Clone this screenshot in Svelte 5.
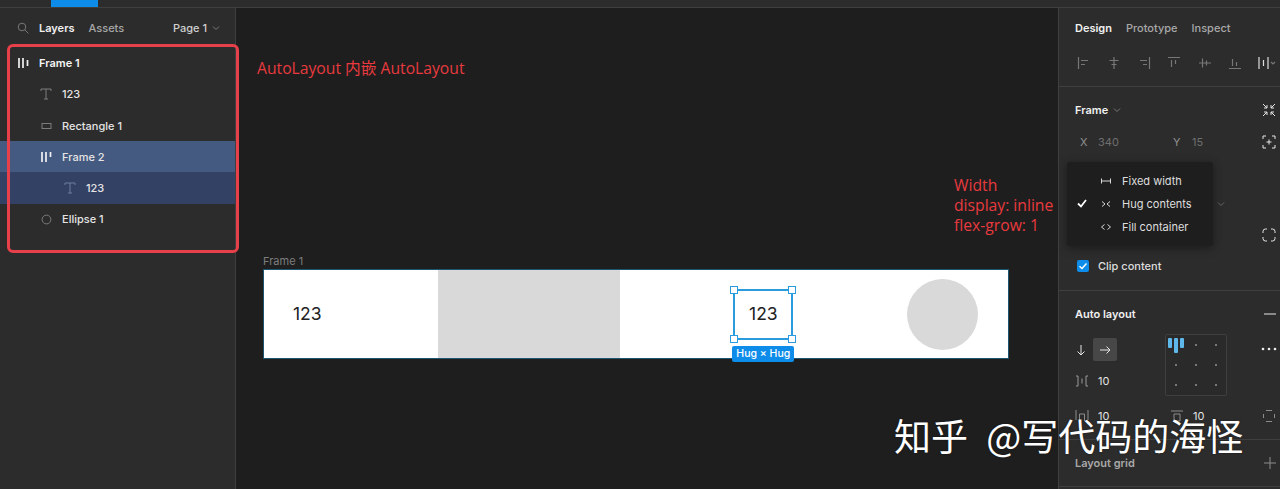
<script lang="ts">
	// Figma editor: layers panel, canvas with auto layout frame, design panel.
	type Layer = { name: string; depth: number; icon: string; tone?: string; strong?: boolean };

	const layers: Layer[] = [
		{ name: 'Frame 1', depth: 1, icon: 'auto', strong: true },
		{ name: '123', depth: 2, icon: 'text' },
		{ name: 'Rectangle 1', depth: 2, icon: 'rect' },
		{ name: 'Frame 2', depth: 2, icon: 'auto2', tone: 'selected' },
		{ name: '123', depth: 3, icon: 'text', tone: 'child' },
		{ name: 'Ellipse 1', depth: 2, icon: 'ellipse' }
	];

	const aligns = [
		'M1.5 1v12M4 4.5h7M4 8.5h4',
		'M7 1v12M2.5 4.5h9M4.5 8.5h5',
		'M12.5 1v12M3 4.5h7M6 8.5h4',
		'M1 1.5h12M4.5 4v7M8.5 4v4',
		'M1 7h12M4.5 2.5v9M8.5 4.5v5',
		'M1 12.5h12M4.5 3v7M8.5 6v4'
	];

	const menu = [
		{ label: 'Fixed width', d: 'M1.5 2.5v5M10.5 2.5v5M1.5 5h9', on: false },
		{ label: 'Hug contents', d: 'M2 2.5 5 5 2 7.5M10 2.5 7 5l3 2.5', on: true },
		{ label: 'Fill container', d: 'M4.5 2.5 1.5 5l3 2.5M7.5 2.5l3 2.5-3 2.5', on: false }
	];

	const dots = [1, 2, 3, 4, 5, 6, 7, 8];
</script>

<div class="app">
	<div class="topbar"><span class="tab-blue"></span></div>

	<div class="main">
		<aside class="left">
			<div class="left-head">
				<svg class="search" width="12" height="12" viewBox="0 0 12 12">
					<circle cx="5" cy="5" r="3.8" />
					<path d="M8 8l3.4 3.4" />
				</svg>
				<span class="tab on">Layers</span>
				<span class="tab">Assets</span>
				<span class="page">Page 1
					<svg width="8" height="6" viewBox="0 0 8 6"><path d="M1 1.5l3 3 3-3" /></svg>
				</span>
			</div>

			<ul class="layers">
				{#each layers as l}
					<li class="layer depth-{l.depth} {l.tone ?? ''}" class:strong={l.strong}>
						<span class="layer-icon">
							{#if l.icon === 'auto'}
								<svg width="11" height="10" viewBox="0 0 11 10"><path class="thick" d="M1 0v10M5 0v10M9.5 2v6" /></svg>
							{:else if l.icon === 'auto2'}
								<svg width="11" height="10" viewBox="0 0 11 10"><path class="thick" d="M1 0v10M5 0v10M9.5 0v5" /></svg>
							{:else if l.icon === 'text'}
								<svg width="12" height="12" viewBox="0 0 12 12"><path class="dim" d="M1 3V1h10v2M6 1v10M4 11h4" /></svg>
							{:else if l.icon === 'rect'}
								<svg width="11" height="8" viewBox="0 0 11 8"><rect class="dim" x="1" y="1.5" width="9" height="5" /></svg>
							{:else}
								<svg width="11" height="11" viewBox="0 0 11 11"><circle class="dim" cx="5.5" cy="5.5" r="4.4" /></svg>
							{/if}
						</span>
						{l.name}
					</li>
				{/each}
			</ul>
			<div class="red-box"></div>
		</aside>

		<main class="canvas">
			<p class="note note-top">AutoLayout 内嵌 AutoLayout</p>
			<p class="note note-side">Width<br />display: inline<br />flex-grow: 1</p>

			<span class="frame-label">Frame 1</span>
			<div class="frame">
				<span class="num">123</span>
				<div class="grey"></div>
				<div class="hug">
					<span class="num">123</span>
					<i class="handle tl"></i><i class="handle tr"></i><i class="handle bl"></i><i class="handle br"></i>
					<span class="hug-tag">Hug × Hug</span>
				</div>
				<div class="ball"></div>
			</div>
		</main>

		<aside class="right">
			<div class="right-tabs">
				<span class="tab on">Design</span>
				<span class="tab">Prototype</span>
				<span class="tab">Inspect</span>
			</div>

			<div class="aligns">
				{#each aligns as d}
					<span class="slot"><svg width="14" height="14" viewBox="0 0 14 14"><path d={d} /></svg></span>
				{/each}
				<span class="slot distribute">
					<svg width="18" height="14" viewBox="0 0 18 14"><path class="bright" d="M1 1v12M10 1v12M5.500 4v6" /><path d="M13 6l2 2 2-2" /></svg>
				</span>
			</div>

			<section class="section">
				<div class="sec-head">
					<span class="sec-title">Frame
						<svg width="8" height="6" viewBox="0 0 8 6"><path d="M1 1.500l3 3 3-3" /></svg>
					</span>
					<svg class="end" width="14" height="14" viewBox="0 0 14 14">
						<path class="bright" d="M1 1l4 4M5 2v3H2M13 1L9 5M9 2v3h3M1 13l4-4M5 12V9H2M13 13L9 9M9 12V9h3" />
					</svg>
				</div>
				<div class="row">
					<span class="axis">X</span><span class="val">340</span>
					<span class="axis y">Y</span><span class="val">15</span>
					<svg class="end" width="14" height="14" viewBox="0 0 14 14">
						<path class="bright" d="M1 4V1h3M10 1h3v3M13 10v3h-3M4 13H1v-3M7 4.500v5M4.500 7h5" />
					</svg>
				</div>
				<div class="row"></div>
				<div class="row">
					<svg class="under-chev" width="8" height="6" viewBox="0 0 8 6"><path d="M1 1.500l3 3 3-3" /></svg>
				</div>
				<div class="row">
					<svg class="end" width="14" height="14" viewBox="0 0 14 14">
						<path class="bright" d="M1 5V3.500Q1 1 3.500 1H5M9 1h1.500Q13 1 13 3.500V5M13 9v1.500Q13 13 10.500 13H9M5 13H3.500Q1 13 1 10.500V9" />
					</svg>
				</div>
				<div class="row clip">
					<span class="check">
						<svg width="12" height="12" viewBox="0 0 12 12"><path d="M2.500 6.200l2.500 2.300 4.500-5" /></svg>
					</span>
					Clip content
				</div>

				<div class="menu">
					{#each menu as m}
						<div class="menu-item">
							<span class="tick">{#if m.on}<svg width="10" height="9" viewBox="0 0 10 9"><path d="M1 4.500l3 3 5-6.500" /></svg>{/if}</span>
							<svg class="menu-icon" width="12" height="10" viewBox="0 0 12 10"><path d={m.d} /></svg>
							{m.label}
						</div>
					{/each}
				</div>
			</section>

			<section class="section al-sec">
				<div class="sec-head">
					<span class="sec-title">Auto layout</span>
					<svg class="end" width="12" height="12" viewBox="0 0 12 12"><path class="bright" d="M0 6h12" /></svg>
				</div>
				<div class="al-grid">
					<div class="al-left">
						<div class="dir">
							<span class="dir-btn">
								<svg width="12" height="12" viewBox="0 0 12 12"><path class="bright" d="M6 1v10M2.500 7.500 6 11l3.500-3.500" /></svg>
							</span>
							<span class="dir-btn active">
								<svg width="12" height="12" viewBox="0 0 12 12"><path class="bright" d="M1 6h10M7.500 2.500 11 6l-3.500 3.500" /></svg>
							</span>
						</div>
						<div class="gap-row">
							<svg width="14" height="12" viewBox="0 0 14 12"><path d="M1 1h2v10H1M13 1h-2v10h2M7 3.500v5" /></svg>
							<span class="num-s">10</span>
						</div>
					</div>
					<div class="align-box">
						<span class="bars"><i></i><i class="long"></i><i></i></span>
						{#each dots as d (d)}<i class="dot"></i>{/each}
					</div>
					<svg class="more" width="16" height="4" viewBox="0 0 16 4"><circle cx="2" cy="2" r="1.300" /><circle cx="8" cy="2" r="1.300" /><circle cx="14" cy="2" r="1.300" /></svg>
				</div>
				<div class="pad-row">
					<svg width="14" height="12" viewBox="0 0 14 12"><path d="M1 0v10M13 0v10M4.500 11V4h5v7" /></svg>
					<span class="num-s first">10</span>
					<svg width="14" height="12" viewBox="0 0 14 12"><path d="M1 1h12M4 4h6v7H4z" /></svg>
					<span class="num-s">10</span>
					<svg class="end" width="14" height="14" viewBox="0 0 14 14"><path d="M4 1.500h6M4 12.500h6M1.500 5v4M12.500 5v4" /></svg>
				</div>
			</section>

			<section class="section last">
				<div class="sec-head">
					<span class="sec-title dimmed">Layout grid</span>
					<svg class="end" width="12" height="12" viewBox="0 0 12 12"><path d="M6 0v12M0 6h12" /></svg>
				</div>
			</section>
		</aside>
	</div>

	<div class="watermark">知乎 @写代码的海怪</div>
</div>

<style>
	:global(body) {
		margin: 0;
		background: #1e1e1e;
	}
	.app {
		position: relative;
		width: 1280px;
		height: 489px;
		overflow: hidden;
		font-family: Inter, 'Noto Sans CJK SC', sans-serif;
		font-size: 11px;
		color: #e6e6e6;
		display: flex;
		flex-direction: column;
	}
	svg {
		fill: none;
		stroke: #8c8c8c;
		stroke-width: 1;
		flex: none;
	}
	p {
		margin: 0;
	}
	ul {
		margin: 0;
		padding: 0;
		list-style: none;
	}
	.watermark {
		position: absolute;
		left: 894px;
		top: 409px;
		z-index: 5;
		font-family: 'Noto Sans CJK SC', sans-serif;
		font-size: 37px;
		line-height: 52px;
		word-spacing: 10px;
		color: #fff;
		text-shadow: 0 0 2px rgba(0, 0, 0, 0.5);
		white-space: nowrap;
	}

	.topbar {
		height: 7px;
		background: #2c2c2c;
		border-bottom: 1px solid #3f3f3f;
		flex: none;
		padding-left: 51px;
	}
	.tab-blue {
		display: block;
		width: 47px;
		height: 7px;
		background: #0d8ce9;
	}
	.main {
		flex: 1;
		display: flex;
		min-height: 0;
	}

	/* left panel */
	.left {
		position: relative;
		z-index: 2;
		width: 235px;
		flex: none;
		background: #2c2c2c;
		border-right: 1px solid #3f3f3f;
	}
	.left-head {
		height: 39px;
		display: flex;
		align-items: center;
		padding-left: 17px;
	}
	.search {
		stroke: #777;
		margin-right: 10px;
	}
	.tab {
		font-weight: 500;
		color: #a8a8a8;
	}
	.tab.on {
		font-weight: 600;
		color: #f0f0f0;
	}
	.left-head .tab {
		margin-right: 14px;
	}
	.page {
		margin-left: auto;
		margin-right: 15px;
		display: flex;
		align-items: center;
		gap: 5px;
		color: #d0d0d0;
		font-weight: 500;
	}
	.page svg {
		stroke: #777;
	}
	.layers {
		display: flex;
		flex-direction: column;
		padding-top: 0.3px;
	}
	.layer {
		height: 31.3px;
		display: flex;
		align-items: center;
		gap: 8px;
		font-weight: 500;
		color: #e4e4e4;
	}
	.layer.strong {
		font-weight: 600;
		color: #f5f5f5;
	}
	.depth-1 {
		padding-left: 15px;
	}
	.depth-2 {
		padding-left: 38px;
	}
	.depth-3 {
		padding-left: 62px;
	}
	.selected {
		background: #455a80;
	}
	.child {
		background: #334264;
	}
	.layer-icon {
		width: 16px;
		display: flex;
		justify-content: center;
	}
	.thick {
		stroke: #f0f0f0;
		stroke-width: 1.7;
	}
	.dim {
		stroke: #7c7c7c;
	}
	.child .dim {
		stroke: #6d7c9e;
	}
	.red-box {
		position: absolute;
		left: 7px;
		top: 36px;
		width: 226px;
		height: 203px;
		border: 3px solid #e8404a;
		border-radius: 6px;
	}

	/* canvas */
	.canvas {
		position: relative;
		flex: 1;
		background: #1e1e1e;
	}
	.note {
		position: absolute;
		color: #e83a3f;
		font-size: 15.7px;
		line-height: 20px;
		font-family: 'Open Sans', 'Noto Sans CJK SC', sans-serif;
	}
	.note-top {
		left: 21px;
		top: 50px;
	}
	.note-side {
		left: 718px;
		top: 167px;
	}
	.frame-label {
		position: absolute;
		left: 27px;
		top: 246px;
		color: #7d7d7d;
		font-size: 11px;
		line-height: 14px;
	}
	.frame {
		position: absolute;
		left: 27px;
		top: 261px;
		width: 746px;
		height: 90px;
		box-sizing: border-box;
		background: #fff;
		outline: 1px solid #1d5672;
		outline-offset: -1px;
		display: flex;
		align-items: center;
		justify-content: space-between;
		padding: 0 31px 0 30px;
	}
	.num {
		font-size: 17.5px;
		color: #222;
		line-height: 22px;
	}
	.grey {
		width: 182px;
		align-self: stretch;
		background: #d9d9d9;
		margin-left: 2.5px;
	}
	.hug {
		position: relative;
		width: 60px;
		height: 51px;
		box-sizing: border-box;
		border: 2px solid #2a9bdc;
		display: flex;
		align-items: center;
		justify-content: center;
	}
	.handle {
		position: absolute;
		width: 6px;
		height: 6px;
		background: #fff;
		border: 1px solid #2a9bdc;
	}
	.tl {
		left: -5px;
		top: -5px;
	}
	.tr {
		right: -5px;
		top: -5px;
	}
	.bl {
		left: -5px;
		bottom: -5px;
	}
	.br {
		right: -5px;
		bottom: -5px;
	}
	.hug-tag {
		position: absolute;
		left: -3px;
		top: 55px;
		background: #0d8ce9;
		color: #fff;
		font-size: 10.5px;
		font-weight: 500;
		line-height: 16px;
		padding: 0 4px;
		border-radius: 2px;
		white-space: nowrap;
	}
	.ball {
		width: 71px;
		height: 71px;
		border-radius: 50%;
		background: #d9d9d9;
	}

	/* right panel */
	.right {
		width: 221px;
		flex: none;
		background: #2c2c2c;
		border-left: 1px solid #3f3f3f;
	}
	.right-tabs {
		height: 39px;
		display: flex;
		align-items: center;
		gap: 14px;
		padding-left: 16px;
	}
	.aligns {
		height: 31px;
		padding-bottom: 8px;
		display: flex;
		align-items: center;
		padding-left: 10px;
	}
	.slot {
		width: 31.5px;
		display: flex;
		justify-content: center;
	}
	.slot svg {
		stroke: #777;
		stroke-width: 1.2;
	}
	.distribute svg {
		margin-left: 4px;
	}
	.distribute .bright {
		stroke: #ddd;
	}
	.bright {
		stroke: #e6e6e6;
	}
	.section {
		position: relative;
		border-top: 1px solid #3f3f3f;
		padding-bottom: 9px;
	}
	.section.al-sec {
		padding-bottom: 7px;
	}
	.section.last {
		padding-bottom: 7px;
		border-bottom: 1px solid #3f3f3f;
	}
	.sec-head {
		height: 32px;
		margin-top: 7px;
		display: flex;
		align-items: center;
		padding-left: 16px;
		padding-right: 4px;
	}
	.sec-title {
		font-weight: 600;
		color: #f0f0f0;
		display: flex;
		align-items: center;
		gap: 5px;
	}
	.sec-title svg {
		stroke: #777;
	}
	.dimmed {
		color: #a8a8a8;
	}
	.end {
		margin-left: auto;
	}
	.row {
		height: 31px;
		display: flex;
		align-items: center;
		padding-left: 21px;
		padding-right: 4px;
	}
	.axis {
		color: #909090;
		width: 18px;
	}
	.axis.y {
		margin-left: 37px;
		width: 19px;
	}
	.val {
		color: #6f6f6f;
		width: 38px;
	}
	.under-chev {
		stroke: #666;
		margin-left: 137px;
	}
	.clip {
		padding-left: 18px;
		gap: 9px;
		font-weight: 500;
		color: #dcdcdc;
	}
	.check {
		width: 12px;
		height: 12px;
		border-radius: 2px;
		background: #0d8ce9;
		display: flex;
	}
	.check svg {
		stroke: #fff;
		stroke-width: 1.5;
	}
	.menu {
		position: absolute;
		left: 8px;
		top: 75px;
		width: 146px;
		height: 84px;
		box-sizing: border-box;
		padding: 7px 0;
		background: #1e1e1e;
		border-radius: 3px;
		box-shadow: 0 2px 10px rgba(0, 0, 0, 0.4);
		display: flex;
		flex-direction: column;
	}
	.menu-item {
		height: 23.5px;
		display: flex;
		align-items: center;
		color: #dedede;
	}
	.tick {
		width: 30px;
		display: flex;
		justify-content: center;
	}
	.tick svg {
		stroke: #fff;
		stroke-width: 1.8;
	}
	.menu-icon {
		stroke: #d8d8d8;
		margin-left: 3px;
		margin-right: 10px;
	}

	.al-grid {
		display: flex;
		height: 62px;
		margin-top: 4px;
		padding-left: 16px;
		padding-right: 3px;
	}
	.al-left {
		width: 90px;
		display: flex;
		flex-direction: column;
	}
	.dir {
		display: flex;
		height: 31px;
		align-items: center;
		gap: 1px;
		margin-left: -6px;
	}
	.dir-btn {
		width: 23px;
		height: 23px;
		border-radius: 2px;
		display: flex;
		align-items: center;
		justify-content: center;
	}
	.dir-btn.active {
		width: 24px;
		background: #474747;
	}
	.gap-row {
		height: 31px;
		display: flex;
		align-items: center;
		gap: 9px;
	}
	.gap-row svg {
		stroke: #999;
	}
	.num-s {
		color: #e2e2e2;
	}
	.align-box {
		position: relative;
		width: 62px;
		height: 62px;
		box-sizing: border-box;
		border: 1px solid #3f3f3f;
		border-radius: 2px;
		display: grid;
		grid-template-columns: repeat(3, 20px);
		grid-template-rows: repeat(3, 20px);
		background: #2a2a2a;
	}
	.bars {
		display: flex;
		gap: 2px;
		align-items: flex-start;
		justify-content: center;
		padding-top: 3px;
	}
	.bars i {
		width: 4px;
		height: 10px;
		background: #5fb8ea;
		border-radius: 1px;
		flex: none;
	}
	.bars .long {
		height: 15px;
	}
	.dot {
		width: 2px;
		height: 2px;
		background: #777;
		place-self: center;
	}
	.more {
		margin-left: auto;
		margin-top: 13px;
		stroke: none;
		fill: #eee;
	}
	.pad-row {
		height: 32px;
		margin-top: 4px;
		display: flex;
		align-items: center;
		padding-left: 16px;
		padding-right: 4px;
		gap: 9px;
	}
	.pad-row .first {
		width: 63px;
	}
</style>
